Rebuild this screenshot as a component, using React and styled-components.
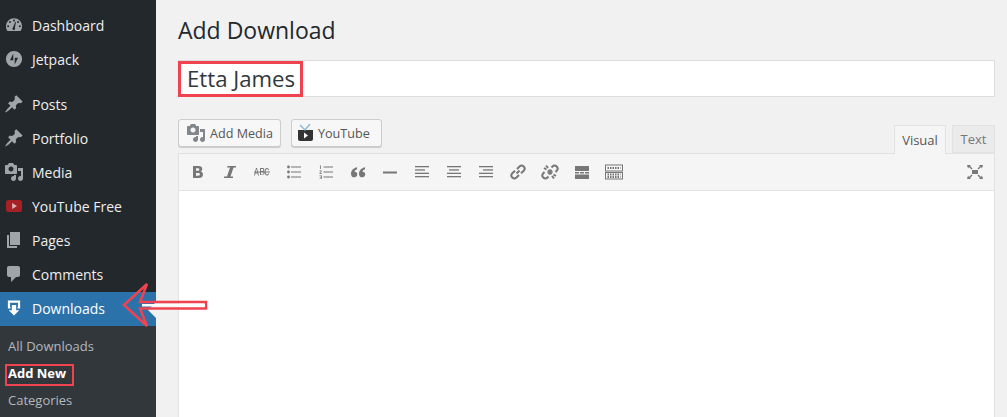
import React from "react";
import styled, { createGlobalStyle } from "styled-components";

const Global = createGlobalStyle`
  html, body { margin: 0; padding: 0; width: 1007px; height: 417px; overflow: hidden; background: #f1f1f1; }
  * { box-sizing: border-box; }
`;
const Page = styled.div`
  position: relative; width: 1007px; height: 417px; overflow: hidden; display: flex;
  font-family: "Open Sans", "Noto Sans", sans-serif; -webkit-font-smoothing: antialiased;
`;
const Sidebar = styled.nav`
  width: 156px; flex: none; background: #23282d; padding-top: 9px; display: flex; flex-direction: column;
`;
const Item = styled.div`
  height: 34px; padding-bottom: 2px; display: flex; align-items: center; color: ${p => p.$active ? "#fff" : "#eee"};
  background: ${p => p.$active ? "#2c72aa" : "transparent"}; font-size: 14px; position: relative;
  margin-bottom: ${p => p.$sep ? "11px" : "0"};
`;
const IconSlot = styled.span`
  width: 32px; flex: none; display: flex; justify-content: center; padding-right: 4px;
  color: ${p => p.$color || "#a0a5aa"};
`;
const Notch = styled.span`
  position: absolute; right: 0; top: 10px; width: 0; height: 0;
  border: 8px solid transparent; border-right-color: #f1f1f1;
`;
const Sub = styled.div`
  flex: 1; background: #32373c; padding-top: 7px; display: flex; flex-direction: column;
`;
const SubItem = styled.div`
  height: 27px; padding: 0 0 2px 8px; display: flex; align-items: center; font-size: 13px;
  font-weight: ${p => p.$on ? 700 : 400}; color: ${p => p.$on ? "#fff" : "#b4b9be"};
`;
const Main = styled.main`
  flex: 1; padding: 14px 12px 0 22px; display: flex; flex-direction: column; min-width: 0;
`;
const Title = styled.h1`
  margin: 0; font-size: 23px; line-height: 32px; font-weight: 400; color: #23282d;
`;
const TitleInput = styled.div`
  margin-top: 14px; height: 37px; background: #fff; border: 1px solid #ddd; padding-left: 8px;
  font-size: 22.2px; line-height: 35px; color: #32373c;
`;
const MediaRow = styled.div`
  margin-top: 22px; height: 35px; display: flex; align-items: flex-start; position: relative; z-index: 1;
`;
const Button = styled.div`
  height: 28px; width: ${p => p.$w}px; margin-right: 10px; display: flex; align-items: center; gap: ${p => p.$gap}px;
  padding-left: ${p => p.$pad}px;
  background: #f7f7f7; border: 1px solid #ccc; border-radius: 3px; box-shadow: 0 1px 0 #ccc;
  font-size: 12.6px; color: #555;
`;
const Tabs = styled.div`
  margin-left: auto; margin-top: 6px; display: flex; gap: 6px; height: 29px;
`;
const Tab = styled.div`
  width: ${p => p.$w}px; height: ${p => p.$on ? 29 : 28}px; display: flex; align-items: center; justify-content: center;
  font-size: 13px; color: ${p => p.$on ? "#555" : "#777"};
  background: ${p => p.$on ? "#f5f5f5" : "#ebebeb"};
  border: 1px solid #e2e2e2; border-bottom: ${p => p.$on ? "none" : "1px solid #e2e2e2"};
`;
const Editor = styled.div`
  flex: 1; margin-top: -1px; background: #fff; border: 1px solid #e2e2e2; border-bottom: none;
`;
const Toolbar = styled.div`
  height: 37px; background: #f5f5f5; border-bottom: 1px solid #e2e2e2; display: flex; align-items: center; padding-left: 3px; color: #777;
`;
const Tool = styled.span`
  width: 32px; height: 20px; flex: none; display: flex; align-items: center; justify-content: center;
`;
const FullTool = styled(Tool)` margin-left: auto; margin-right: 3px; `;
const ButtonIcon = styled.span` display: flex; color: #82878c; `;
const Overlay = styled.svg`
  position: absolute; left: 0; top: 0; pointer-events: none;
`;
const Mark = styled.div`
  position: absolute; border: ${p => p.$b}px solid #f0434f; pointer-events: none;
  left: ${p => p.$x}px; top: ${p => p.$y}px; width: ${p => p.$w}px; height: ${p => p.$h}px;
`;

const S = ({ children, w = 18, h = 18 }) => (
  <svg width={w} height={h} viewBox="0 0 20 20" fill="currentColor">{children}</svg>
);
const Pin = () => <S w={20} h={20}><path d="M10.440 3.020l1.820-1.820 6.360 6.350-1.830 1.820c-1.050-.68-2.480-.57-3.410.36l-.75.75c-.92.93-1.040 2.350-.35 3.410l-1.830 1.820-2.410-2.410-2.800 2.790c-.42.42-3.380 2.710-3.800 2.290s1.860-3.390 2.280-3.810l2.790-2.790L4.100 9.360l1.830-1.820c1.050.69 2.480.57 3.400-.36l.75-.75c.93-.92 1.050-2.350.36-3.410z"/></S>;
const Gauge = () => <S w={18} h={18}><path fillRule="evenodd" d="M10 2.500a9 9 0 0 0-9 9c0 2 .7 3.800 1.800 5.300h14.400A9 9 0 0 0 19 11.500a9 9 0 0 0-9-9zM10 4a1.100 1.100 0 1 1 0 2.200A1.100 1.100 0 0 1 10 4zM5.500 5.600a1.100 1.100 0 1 1 0 2.200 1.100 1.100 0 0 1 0-2.200zm9 0a1.100 1.100 0 1 1 0 2.200 1.100 1.100 0 0 1 0-2.200zM3.500 10.400a1.100 1.100 0 1 1 0 2.200 1.100 1.100 0 0 1 0-2.200zm13 0a1.100 1.100 0 1 1 0 2.200 1.100 1.100 0 0 1 0-2.200zM11.500 6.500l.7.2-1.200 6.400a1.500 1.500 0 1 1-2.200-.3z"/></S>;
const Jet = () => <S w={18} h={18}><path fillRule="evenodd" d="M10 1a9 9 0 1 0 0 18 9 9 0 0 0 0-18zM9.200 4v7.500H5.500zm1.600 4.500h3.700L10.800 16z"/></S>;
const MediaI = ({ s = 20 }) => <S w={s} h={s}><path fillRule="evenodd" d="M13 11V4c0-.55-.45-1-1-1h-1.670L9 1H5L3.670 3H2c-.55 0-1 .45-1 1v7c0 .55.45 1 1 1h10c.55 0 1-.45 1-1zM7 4.500c1.380 0 2.500 1.120 2.500 2.500S8.380 9.500 7 9.500 4.500 8.380 4.500 7 5.620 4.500 7 4.500zM14 6h5v10.500c0 1.380-1.120 2.500-2.500 2.500S14 17.880 14 16.500s1.120-2.500 2.500-2.500c.17 0 .34.02.5.05V9h-3V6zm-4 8.050V13h2v3.500c0 1.380-1.120 2.500-2.500 2.500S7 17.880 7 16.500 8.120 14 9.500 14c.17 0 .34.02.5.05z"/></S>;
const Yt = () => <svg width="16" height="12" viewBox="0 0 16 12"><rect width="16" height="12" rx="2.500" fill="#a52126"/><path d="M6.200 3l4.800 3-4.800 3z" fill="#d8b5b5"/></svg>;
const PagesI = () => <S w={20} h={20}><path d="M6 15V2h10v13H6zm-1 1h8v2H3V5h2v11z"/></S>;
const CommentI = () => <S w={20} h={20}><path d="M5 2h9c1.100 0 2 .9 2 2v7c0 1.100-.9 2-2 2h-2l-5 5v-5H5c-1.100 0-2-.9-2-2V4c0-1.100.9-2 2-2z"/></S>;
const DownI = () => <svg width="14" height="18" viewBox="0 0 16 19" fill="#fff"><path fillRule="evenodd" d="M1 1h14v9h-3V8.500h.5V3.500h-9v5H4V10H1z"/><path d="M5.500 6h5v6H14l-6 6-6-6h3.500z"/></svg>;

const Align = ({ x }) => (
  <svg width="14" height="14" viewBox="0 0 14 14" fill="currentColor">
    <rect y="1" width="14" height="1.300"/><rect x={x} y="4.300" width="10" height="1.300"/>
    <rect y="7.700" width="14" height="1.300"/><rect y="11" width="14" height="1.300"/>
  </svg>
);

const tools = [
  <svg width="12" height="14" viewBox="0 0 12 14" fill="currentColor"><path fillRule="evenodd" d="M1 1h5.500c2.500 0 3.800 1.100 3.800 3 0 1.200-.7 2.100-1.700 2.500 1.400.3 2.400 1.300 2.400 2.900C11 11.700 9.300 13 6.800 13H1zm3 2.300v2.500h2c.8 0 1.300-.5 1.300-1.300S6.800 3.300 6 3.300zm0 4.600v2.800h2.400c1 0 1.500-.5 1.500-1.400s-.6-1.400-1.600-1.400z"/></svg>,
  <svg width="12" height="14" viewBox="0 0 12 14" fill="currentColor"><path d="M3.500 1H12v1.500H9.500L6.500 11.500H9V13H0v-1.500h3l3-9H3z"/></svg>,
  <svg width="16" height="10" viewBox="0 0 16 10" fill="currentColor"><path d="M0 4.500h16v1H0z"/><path fillRule="evenodd" d="M2 1h1l2 7.500H4l-.4-2H1.400l-.4 2H0zM1.600 5.500h1.800L2.500 2zM6 1h2.500c1.200 0 1.800.6 1.800 1.700 0 .7-.4 1.200-.9 1.500.7.2 1.100.8 1.100 1.600 0 1.500-.9 2.200-2.200 2.200H6zm1 1v2h1.300c.6 0 1-.4 1-1s-.3-1-1-1zm0 3v2.500h1.300c.8 0 1.200-.5 1.200-1.300S9.100 5 8.300 5zM15 6.500c-.2 1.300-1 2.100-2.100 2.100-1.400 0-2.300-1.300-2.300-3.800S11.500 1 12.900 1c1.100 0 1.900.8 2.100 2l-1 .2c-.1-.7-.5-1.200-1.100-1.200-.8 0-1.300 1-1.300 2.800s.5 2.800 1.300 2.800c.6 0 1-.5 1.100-1.300z"/></svg>,
  <svg width="14" height="14" viewBox="0 0 14 14" fill="currentColor"><circle cx="1.500" cy="2" r="1.400"/><circle cx="1.500" cy="7" r="1.400"/><circle cx="1.500" cy="12" r="1.400"/><rect x="4" y="1.500" width="10" height="1"/><rect x="4" y="6.500" width="10" height="1"/><rect x="4" y="11.500" width="10" height="1"/></svg>,
  <svg width="14" height="14" viewBox="0 0 14 14" fill="currentColor"><rect x="4.500" y="1.500" width="9.500" height="1"/><rect x="4.500" y="6.500" width="9.500" height="1"/><rect x="4.500" y="11.500" width="9.500" height="1"/><path d="M1 .5h1v3.500H1.200V1.300H.7zM.5 5.500h2.400v.6L1.300 8h1.700v.7H.4v-.6L2 6.200H.5zM.5 10.500H3v3.300H.5v-.6h1.700v-.7H1v-.6h1.200v-.7H.5z"/></svg>,
  <svg width="15" height="11" viewBox="0 0 16 11" fill="currentColor"><path d="M6.500 0v2C4.800 2.500 3.800 3.600 3.700 4.800c1.500-.3 3 .8 3 2.600 0 2-1.400 3.200-3.100 3.200C1.400 10.600 0 9 0 6.700 0 3.500 2.500.8 6.500 0zM15 0v2c-1.700.5-2.700 1.600-2.800 2.800 1.500-.3 3 .8 3 2.600 0 2-1.400 3.200-3.100 3.200-2.200 0-3.600-1.600-3.600-3.900C8.500 3.500 11 .8 15 0z"/></svg>,
  <svg width="14" height="3" viewBox="0 0 14 3" fill="currentColor"><rect width="14" height="2" y=".5"/></svg>,
  <Align x={0} />,
  <Align x={2} />,
  <Align x={4} />,
  <svg width="18" height="18" viewBox="0 0 18 18" fill="none" stroke="currentColor" strokeWidth="2"><path d="M7.500 10.500l3-3"/><path d="M8 6l2.500-2.500a3 3 0 0 1 4.200 0 3 3 0 0 1 0 4.200L12 10.300"/><path d="M10 12l-2.500 2.500a3 3 0 0 1-4.200 0 3 3 0 0 1 0-4.200L6 7.700"/></svg>,
  <svg width="18" height="18" viewBox="0 0 18 18" fill="none" stroke="currentColor" strokeWidth="2"><path d="M10.500 4.500L11.500 3.500a3 3 0 0 1 4.200 0 3 3 0 0 1 0 4.200L14.500 9"/><path d="M7.500 13.500L6.500 14.500a3 3 0 0 1-4.200 0 3 3 0 0 1 0-4.200L3.500 9"/><path d="M5 2.500l2 2.500M3 5l2.500 1.500"/><path d="M13 15.500l-2-2.500M15 13l-2.500-1.500"/><path strokeWidth="1.200" d="M9 6v2.500M9 9.500V12M6 9h2.500M9.500 9H12M7 7l4 4M11 7l-4 4"/></svg>,
  <svg width="14" height="13" viewBox="0 0 14 13" fill="currentColor"><rect width="14" height="5"/><rect y="6" width="4" height="1.500"/><rect x="5" y="6" width="4" height="1.500"/><rect x="10" y="6" width="4" height="1.500"/><rect y="8.500" width="14" height="4.500"/></svg>,
  <svg width="18" height="16" viewBox="0 0 18 16" fill="none" stroke="currentColor"><rect x=".5" y="1" width="17" height="6"/><rect x=".5" y="8.500" width="17" height="6.500"/><path strokeDasharray="1.500 1" strokeWidth="2" d="M2.500 4h13M2.500 10.500h13M2.500 13h13"/></svg>,
];

const menu = [
  ["Dashboard", <Gauge />], ["Jetpack", <Jet />, true], ["Posts", <Pin />], ["Portfolio", <Pin />],
  ["Media", <MediaI />], ["YouTube Free", <Yt />], ["Pages", <PagesI />], ["Comments", <CommentI />],
];

export default function App() {
  return (
    <Page>
      <Global />
      <Sidebar>
        {menu.map(([t, ic, sep]) => <Item key={t} $sep={sep}><IconSlot>{ic}</IconSlot>{t}</Item>)}
        <Item $active><IconSlot $color="#fff"><DownI /></IconSlot>Downloads<Notch /></Item>
        <Sub>
          <SubItem>All Downloads</SubItem>
          <SubItem $on>Add New</SubItem>
          <SubItem>Categories</SubItem>
        </Sub>
      </Sidebar>
      <Main>
        <Title>Add Download</Title>
        <TitleInput>Etta James</TitleInput>
        <MediaRow>
          <Button $w={103} $pad={7} $gap={4}><ButtonIcon><MediaI s={20} /></ButtonIcon>Add Media</Button>
          <Button $w={91} $pad={5} $gap={4}>
            <svg width="17" height="18" viewBox="0 0 17 18"><path d="M1 6h15v9a2 2 0 0 1-2 2H3a2 2 0 0 1-2-2z" fill="#333"/><path d="M7 8.500l4 3-4 3z" fill="#fff"/><path d="M3 1l5 5 5-6" stroke="#8fb8d8" fill="none" strokeWidth="1.500"/></svg>
            YouTube
          </Button>
          <Tabs>
            <Tab $w={52} $on>Visual</Tab>
            <Tab $w={43}>Text</Tab>
          </Tabs>
        </MediaRow>
        <Editor>
          <Toolbar>
            {tools.map((t, i) => <Tool key={i}>{t}</Tool>)}
            <FullTool>
              <svg width="16" height="14" viewBox="0 0 16 14" fill="currentColor"><rect x="5" y="5" width="6" height="4"/><path d="M0 0h4L3 1l2.500 2.500-1 1L2 2 1 3.500zM16 0h-4l1 1-2.500 2.500 1 1L14 2l1 1.500zM0 14h4l-1-1 2.500-2.500-1-1L2 12l-1-1.500zM16 14h-4l1-1-2.500-2.500 1-1L14 12l1-1.500z"/></svg>
            </FullTool>
          </Toolbar>
        </Editor>
      </Main>
      <Mark $b={3} $x={178} $y={61} $w={125} $h={36} />
      <Mark $b={2} $x={5} $y={364} $w={69} $h={22} />
      <Overlay width="1007" height="417" viewBox="0 0 1007 417">
        <path d="M124 305L147 284L140 302H206V308.500H140L147 326Z" fill="none" stroke="#f0434f" strokeWidth="2.500" strokeLinejoin="miter" />
        <path d="M142 305.200H205" stroke="#fff" strokeWidth="2.500" />
      </Overlay>
    </Page>
  );
}
